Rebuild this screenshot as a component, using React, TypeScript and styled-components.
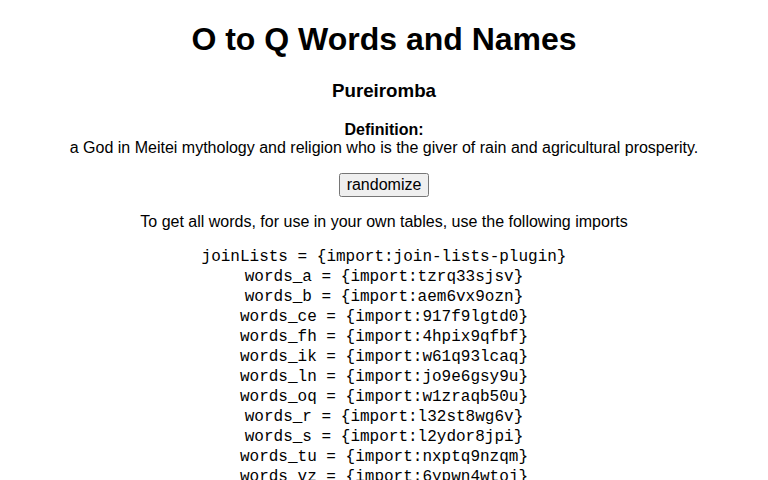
import styled, { createGlobalStyle } from "styled-components";

const GlobalStyle = createGlobalStyle`
  body {
    margin: 0 8px 8px;
    font-family: "Liberation Sans", Arial, sans-serif;
    color: #000;
    background: #fff;
  }
`;

const imports = [
  ["joinLists", "join-lists-plugin"],
  ["words_a", "tzrq33sjsv"],
  ["words_b", "aem6vx9ozn"],
  ["words_ce", "917f9lgtd0"],
  ["words_fh", "4hpix9qfbf"],
  ["words_ik", "w61q93lcaq"],
  ["words_ln", "jo9e6gsy9u"],
  ["words_oq", "w1zraqb50u"],
  ["words_r", "l32st8wg6v"],
  ["words_s", "l2ydor8jpi"],
  ["words_tu", "nxptq9nzqm"],
  ["words_vz", "6ypwn4wtoj"],
];

const Page = styled.div`
  text-align: center;
`;

const Title = styled.h1`
  font-size: 32px;
  font-weight: bold;
  margin: 21.44px 0;
`;

const Word = styled.h3`
  font-size: 18.72px;
  font-weight: bold;
  margin: 18.72px 0;
`;

const Definition = styled.div`
  font-size: 16px;
  line-height: normal;

  b {
    display: block;
  }
`;

const RandomButton = styled.button`
  font-family: "Liberation Sans", Arial, sans-serif;
  font-size: 16px;
  margin: 16px 0 0;
`;

const Note = styled.p`
  font-size: 16px;
  margin: 16px 0;
`;

const CodeList = styled.div`
  font-family: "Liberation Mono", "Courier New", monospace;
  font-size: 16px;
  line-height: 20px;
  white-space: pre;
`;

const App = () => (
  <Page>
    <GlobalStyle />
    <Title>O to Q Words and Names</Title>
    <Word>Pureiromba</Word>
    <Definition>
      <b>Definition:</b>
      a God in Meitei mythology and religion who is the giver of rain and
      agricultural prosperity.
    </Definition>
    <RandomButton>randomize</RandomButton>
    <Note>To get all words, for use in your own tables, use the following imports</Note>
    <CodeList>
      {imports.map(([name, id]) => (
        <div key={name}>
          {name} = {"{"}import:{id}
          {"}"}
        </div>
      ))}
    </CodeList>
  </Page>
);

export default App;
